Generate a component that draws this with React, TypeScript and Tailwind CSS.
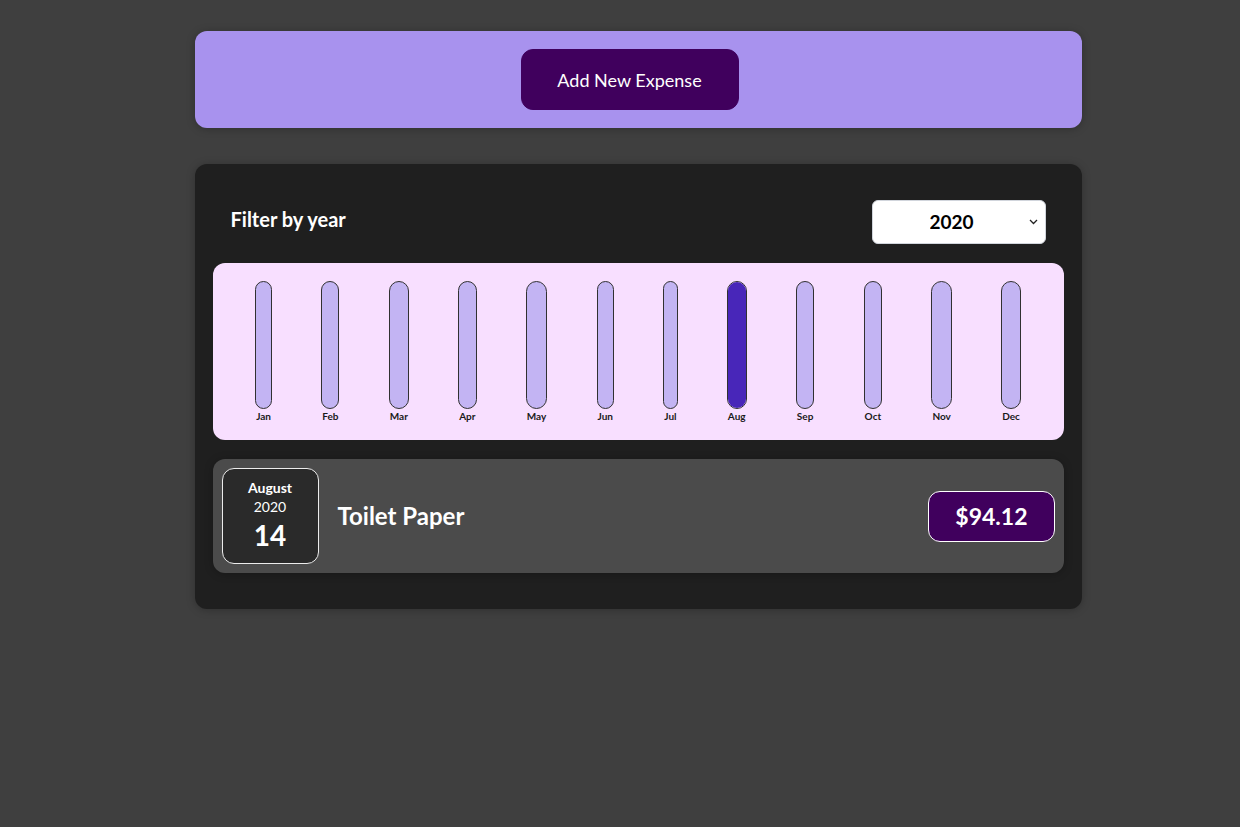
const months = ["Jan", "Feb", "Mar", "Apr", "May", "Jun", "Jul", "Aug", "Sep", "Oct", "Nov", "Dec"];

const expenses = [{ id: "e1", title: "Toilet Paper", amount: 94.12, date: new Date(2020, 7, 14) }];

function ChartBar({ label, value, max }: { label: string; value: number; max: number }) {
  const fill = max > 0 ? Math.round((value / max) * 100) + "%" : "0%";
  return (
    <div className="flex h-full flex-col items-center">
      <div className="flex h-full w-full flex-col justify-end overflow-hidden rounded-[12px] border border-[#313131] bg-[#c3b4f3]">
        <div className="w-full bg-[#4826b9]" style={{ height: fill }} />
      </div>
      <div className="px-[1px] pt-[1px] text-center text-[10px] leading-[12px] font-bold text-[#1a1a1a]">{label}</div>
    </div>
  );
}

function ExpenseDate({ date }: { date: Date }) {
  const month = date.toLocaleString("en-US", { month: "long" });
  return (
    <div className="flex h-[96px] w-[97px] shrink-0 flex-col items-center justify-center rounded-[12px] border border-[#ececec] bg-[#2a2a2a] text-white">
      <div className="text-[14px] leading-[18px] font-bold">{month}</div>
      <div className="text-[14px] leading-[20px]">{date.getFullYear()}</div>
      <div className="text-[28px] leading-[36px] font-bold">{date.getDate()}</div>
    </div>
  );
}

export default function App() {
  const totals = months.map((_, i) => expenses.filter((e) => e.date.getMonth() === i).reduce((s, e) => s + e.amount, 0));
  const max = Math.max(...totals);

  return (
    <div className="min-h-[827px] bg-[#3f3f3f] pt-[31px] pl-[36px] font-['Lato',sans-serif] text-[18px]">
      <div className="mx-auto flex w-[887px] justify-center rounded-[12px] bg-[#a892ee] p-[18px] shadow-[0_1px_8px_rgba(0,0,0,0.25)]">
        <button className="mr-[17px] h-[61px] w-[218px] cursor-pointer rounded-[12px] border border-[#40005d] bg-[#40005d] pt-[2px] text-[18px] text-white">
          Add New Expense
        </button>
      </div>

      <div className="mx-auto mt-[36px] w-[887px] rounded-[12px] bg-[#1f1f1f] p-[18px] shadow-[0_1px_8px_rgba(0,0,0,0.25)]">
        <div className="px-[18px] text-white">
          <div className="mt-[18px] mb-[19px] flex w-full items-center justify-between">
            <label className="mb-[7px] text-[20px] font-bold">Filter by year</label>
            <div className="relative">
              <select
                defaultValue="2020"
                className="h-[44px] w-[174px] appearance-none rounded-[6px] border border-gray-300 bg-white pl-[57px] text-[19px] font-bold text-black"
              >
                <option value="2022">2022</option>
                <option value="2021">2021</option>
                <option value="2020">2020</option>
                <option value="2019">2019</option>
              </select>
              <svg
                className="pointer-events-none absolute top-[19px] right-[8px]"
                width="9"
                height="6"
                viewBox="0 0 9 6"
                fill="none"
                stroke="#222"
                strokeWidth="1.3"
              >
                <path d="M1 1l3.5 3.5L8 1" />
              </svg>
            </div>
          </div>
        </div>

        <div className="flex h-[177px] justify-around rounded-[12px] bg-[#f8dfff] p-[18px] text-center">
          {months.map((m, i) => (
            <ChartBar key={m} label={m} value={totals[i]} max={max} />
          ))}
        </div>

        {expenses.map((e) => (
          <div
            key={e.id}
            className="mt-[19px] mb-[18px] flex items-center justify-between rounded-[12px] bg-[#4b4b4b] p-[9px] shadow-[0_1px_8px_rgba(0,0,0,0.25)]"
          >
            <ExpenseDate date={e.date} />
            <div className="flex flex-1 items-center justify-start">
              <h2 className="mx-[19px] flex-1 text-[24px] font-bold text-white">{e.title}</h2>
              <div className="flex h-[51px] items-center rounded-[12px] border border-white bg-[#40005d] px-[26px] text-[23px] font-bold text-white">
                ${e.amount}
              </div>
            </div>
          </div>
        ))}
      </div>
    </div>
  );
}
